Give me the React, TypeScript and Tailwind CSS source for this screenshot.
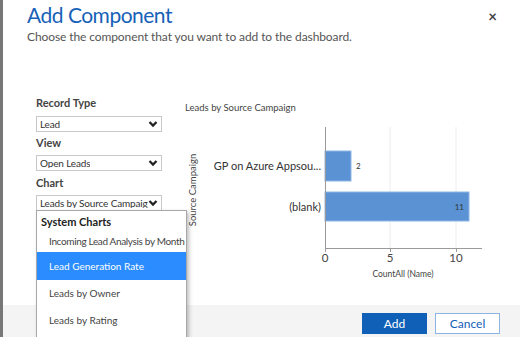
import React from "react";

const font = { fontFamily: 'Lato, "Open Sans", sans-serif' };

function Chevron() {
  return (
    <svg width="10" height="8" viewBox="0 0 10 8" className="shrink-0">
      <polyline points="1.5,2 5,5.5 8.5,2" fill="none" stroke="#222" strokeWidth="2.3" />
    </svg>
  );
}

function FakeSelect({ value }: { value: string }) {
  return (
    <div className="flex h-[16px] w-[126px] items-center justify-between border border-[#c8c8c8] bg-white pl-[3px] pr-[3px]">
      <span className="overflow-hidden whitespace-nowrap text-[10px] leading-none tracking-[-0.15px] text-[#333]">
        {value}
      </span>
      <Chevron />
    </div>
  );
}

function Chart() {
  const label = { fontFamily: 'Lato, "Open Sans", sans-serif' };
  return (
    <svg width="320" height="192" viewBox="0 0 320 192" style={label}>
      <text x="5" y="15" fontSize="9.5" fill="#444">Leads by Source Campaign</text>
      {/* grid */}
      <line x1="210" y1="31" x2="210" y2="152" stroke="#ececec" />
      <line x1="276" y1="31" x2="276" y2="152" stroke="#ececec" />
      {/* bars */}
      <rect x="145" y="55" width="26" height="30" fill="#5b92d4" stroke="#8fb5e6" />
      <rect x="145" y="96" width="144" height="29" fill="#5b92d4" stroke="#8fb5e6" />
      <text x="176" y="73" fontSize="8" fill="#333">2</text>
      <text x="284" y="114" fontSize="8" fill="#333" textAnchor="end">11</text>
      {/* axes */}
      <line x1="145.5" y1="31" x2="145.5" y2="156" stroke="#9a9a9a" />
      <line x1="145" y1="152.5" x2="302" y2="152.5" stroke="#9a9a9a" />
      <line x1="210.5" y1="152" x2="210.5" y2="156" stroke="#9a9a9a" />
      <line x1="276.5" y1="152" x2="276.5" y2="156" stroke="#9a9a9a" />
      {/* category labels */}
      <text x="141" y="74" fontSize="11" fill="#333" textAnchor="end">GP on Azure Appsou...</text>
      <text x="141" y="115" fontSize="11" fill="#333" textAnchor="end">(blank)</text>
      {/* tick labels */}
      <text x="145" y="166" fontSize="11.5" fill="#444" textAnchor="middle">0</text>
      <text x="210" y="166" fontSize="11.5" fill="#444" textAnchor="middle">5</text>
      <text x="276" y="166" fontSize="11.5" fill="#444" textAnchor="middle">10</text>
      <text x="223" y="181" fontSize="8.5" fill="#444" textAnchor="middle">CountAll (Name)</text>
      <text x="16" y="94" fontSize="9.5" fill="#444" textAnchor="middle" transform="rotate(-90 16 94)">
        Source Campaign
      </text>
    </svg>
  );
}

export default function App() {
  return (
    <div
      className="relative flex h-[337px] w-[520px] flex-col overflow-hidden border-l-[3px] border-[#777] bg-white"
      style={font}
    >
      <div className="relative h-[45px] pl-[24px] pt-[1px]">
        <h1 className="text-[21px] leading-[28px] tracking-[-0.5px] text-[#1862b8]">Add Component</h1>
        <p className="text-[12px] leading-[16px] tracking-[-0.1px] text-[#555]">
          Choose the component that you want to add to the dashboard.
        </p>
        <span className="absolute right-[23px] top-[9px] text-[15px] font-bold leading-none text-[#444]">
          ×
        </span>
      </div>

      <div className="flex h-[260px] pl-[33px] pt-[51px]">
        <div className="flex w-[126px] flex-col">
          <div className="mb-[6px] text-[11px] font-bold leading-[14px] text-[#444]">Record Type</div>
          <FakeSelect value="Lead" />
          <div className="mb-[5px] mt-[4px] text-[11px] font-bold leading-[14px] text-[#444]">View</div>
          <FakeSelect value="Open Leads" />
          <div className="mb-[5px] mt-[5px] text-[11px] font-bold leading-[14px] text-[#444]">Chart</div>
          <FakeSelect value="Leads by Source Campaign" />
        </div>
        <div className="ml-[18px]">
          <Chart />
        </div>
      </div>

      <div className="flex flex-1 items-start justify-end gap-[8px] bg-[#f4f4f4] pr-[20px] pt-[8px]">
        <button className="h-[21px] w-[65px] bg-[#1160b7] text-[12px] text-white">Add</button>
        <button className="h-[21px] w-[65px] border border-[#8cb4e4] bg-white text-[12px] text-[#1160b7]">
          Cancel
        </button>
      </div>

      <div className="absolute left-[33px] top-[210px] h-[140px] w-[151px] overflow-hidden border border-[#a8a8a8] bg-white shadow-[2px_2px_4px_rgba(0,0,0,0.25)]">
        <div className="whitespace-nowrap pl-[4px] pt-[3px] text-[11px] font-bold leading-[16px] text-[#222]">
          System Charts
        </div>
        <div className="whitespace-nowrap pl-[12px] text-[10px] leading-[22px] tracking-[-0.35px] text-[#444]">
          Incoming Lead Analysis by Month
        </div>
        <div className="whitespace-nowrap bg-[#2a8cff] pl-[12px] text-[10px] leading-[28px] text-white">
          Lead Generation Rate
        </div>
        <div className="whitespace-nowrap pl-[12px] text-[10px] leading-[27px] text-[#444]">Leads by Owner</div>
        <div className="whitespace-nowrap pl-[12px] text-[10px] leading-[26px] text-[#444]">Leads by Rating</div>
      </div>
    </div>
  );
}
